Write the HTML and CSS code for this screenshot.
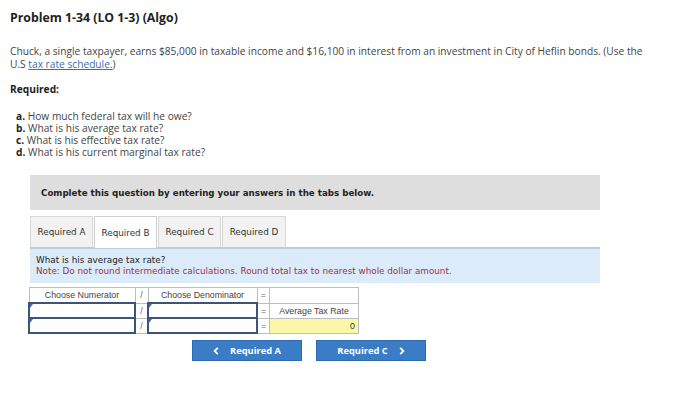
FILE: index.html
```html
<!DOCTYPE html>
<html>
<head>
<meta charset="utf-8">
<link rel="stylesheet" href="styles.css">
</head>
<body>
<div class="page">
  <h1 class="title">Problem 1-34 (LO 1-3) (Algo)</h1>
  <p class="intro">Chuck, a single taxpayer, earns $85,000 in taxable income and $16,100 in interest from an investment in City of Heflin bonds. (Use the U.S <a class="link" href="#">tax rate schedule.</a>)</p>
  <p class="req">Required:</p>
  <ul class="qs">
    <li><b>a.</b> How much federal tax will he owe?</li>
    <li><b>b.</b> What is his average tax rate?</li>
    <li><b>c.</b> What is his effective tax rate?</li>
    <li><b>d.</b> What is his current marginal tax rate?</li>
  </ul>
  <div class="block">
    <div class="banner">Complete this question by entering your answers in the tabs below.</div>
    <div class="tabs">
      <div class="tab">Required A</div>
      <div class="tab active">Required B</div>
      <div class="tab">Required C</div>
      <div class="tab">Required D</div>
    </div>
    <div class="prompt">
      <div>What is his average tax rate?</div>
      <div class="note">Note: Do not round intermediate calculations. Round total tax to nearest whole dollar amount.</div>
    </div>
    <table class="calc">
      <tr>
        <td class="c1 lbl">Choose Numerator</td>
        <td class="op">/</td>
        <td class="c3 lbl">Choose Denominator</td>
        <td class="op">=</td>
        <td class="c5"></td>
      </tr>
      <tr>
        <td class="inp"><span class="mark"></span></td>
        <td class="op">/</td>
        <td class="inp"><span class="mark"></span></td>
        <td class="op">=</td>
        <td class="lbl">Average Tax Rate</td>
      </tr>
      <tr>
        <td class="inp"><span class="mark"></span></td>
        <td class="op">/</td>
        <td class="inp"><span class="mark"></span></td>
        <td class="op">=</td>
        <td class="result">0</td>
      </tr>
    </table>
    <div class="nav">
      <button class="btn"><svg class="chev left" width="6" height="8" viewBox="0 0 6 8"><path d="M4.8 0.8 L1.6 4 L4.8 7.2" fill="none" stroke="#fff" stroke-width="1.8"/></svg>Required A</button>
      <button class="btn">Required C<svg class="chev right" width="6" height="8" viewBox="0 0 6 8"><path d="M1.2 0.8 L4.4 4 L1.2 7.2" fill="none" stroke="#fff" stroke-width="1.8"/></svg></button>
    </div>
  </div>
</div>
</body>
</html>
```
FILE: styles.css
```css
html, body {
  margin: 0;
  padding: 0;
  background: #fff;
}
.page {
  padding: 10px 0 0 10px;
  font-family: "Open Sans", "Lato", sans-serif;
  color: #333;
}
.title {
  margin: 0;
  font-size: 12.3px;
  font-weight: 700;
  color: #222;
  line-height: 16px;
}
.intro {
  margin: 19px 0 0 0;
  width: 645px;
  font-size: 10.2px;
  line-height: 13px;
  color: #444;
}
.link {
  color: #3a6fa8;
  text-decoration: underline;
}
.req {
  margin: 12px 0 0 0;
  font-size: 10.2px;
  font-weight: 700;
  color: #222;
  line-height: 13px;
}
.qs {
  list-style: none;
  margin: 14px 0 0 6px;
  padding: 0;
  font-size: 10.2px;
  line-height: 12px;
  color: #444;
}
.qs b {
  color: #222;
}
.block {
  margin: 17px 0 0 20px;
  width: 570px;
}
.banner {
  background: #dedede;
  height: 35px;
  box-sizing: border-box;
  padding: 0 11px;
  display: flex;
  align-items: center;
  font-family: "DejaVu Sans", Verdana, sans-serif;
  font-size: 8.7px;
  font-weight: 700;
  color: #222;
}
.tabs {
  display: flex;
  margin-top: 6px;
  gap: 1px;
  height: 31px;
}
.tab {
  box-sizing: border-box;
  width: 63px;
  height: 31px;
  display: flex;
  align-items: center;
  justify-content: center;
  background: #f2f2f2;
  border: 1px solid #d8d8d8;
  border-bottom: none;
  font-family: "DejaVu Sans", Verdana, sans-serif;
  font-size: 8.8px;
  color: #333;
}
.tab:last-child {
  width: 64px;
}
.tab.active {
  background: #fff;
  border-color: #cfcfcf;
  position: relative;
  z-index: 1;
  height: 32px;
}
.prompt {
  background: #dcebf9;
  border-top: 2px solid #b9cde0;
  height: 36px;
  box-sizing: border-box;
  padding: 6px 6px 0;
  font-family: "DejaVu Sans", Verdana, sans-serif;
  font-size: 8.8px;
  line-height: 11px;
  color: #222;
}
.note {
  color: #a0304a;
}
.calc {
  margin-top: 4px;
  margin-left: -2px;
  border-collapse: collapse;
  table-layout: fixed;
  font-family: "Liberation Sans", Arial, sans-serif;
  font-size: 8.8px;
  color: #444;
}
.calc td {
  border: 1px solid #bdbdbd;
  height: 14px;
  padding: 0;
  text-align: center;
}
.c1 { width: 105px; }
.c3 { width: 108px; }
.c5 { width: 88px; }
.calc td.op { width: 11px; color: #666; }
.calc td.inp {
  border: 2px solid #3c5478;
  position: relative;
  height: 12px;
}
.mark {
  position: absolute;
  left: 0;
  top: 0;
  width: 0;
  height: 0;
  border-top: 4px solid #3d6db0;
  border-right: 3px solid transparent;
}
.calc td.result {
  background: #fbf7a8;
  text-align: right;
  padding-right: 3px;
  color: #333;
}
.nav {
  display: flex;
  gap: 14px;
  margin: 6px 0 0 162px;
}
.btn {
  width: 110px;
  height: 21px;
  background: #3b7cc6;
  border: 1px solid #2e6aad;
  color: #fff;
  font-family: "Open Sans", sans-serif;
  font-weight: 700;
  font-size: 9.3px;
  display: flex;
  align-items: center;
  justify-content: center;
  padding: 0;
}
.chev.left {
  margin-right: 11px;
}
.chev.right {
  margin-left: 11px;
}
```
